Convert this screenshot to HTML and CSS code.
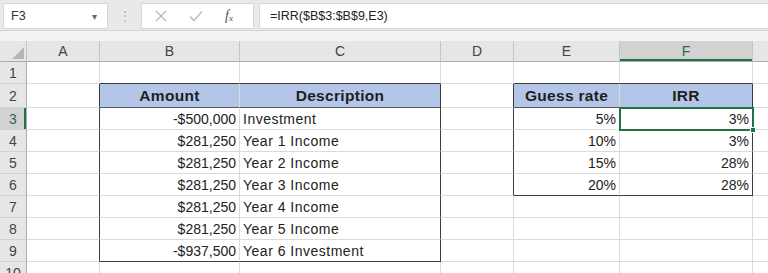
FILE: index.html
```html
<!DOCTYPE html>
<html lang="en">
<head>
  <meta charset="UTF-8"/>
  <title>IRR guess rate</title>
  <link rel="stylesheet" href="styles.css">
</head>
<body>
  <!-- Formula bar -->
  <div class="formula-bar">
    <div class="name-box">
      <span>F3</span>
      <span class="caret">&#9662;</span>
    </div>
    <div class="grip">&#8942;</div>
    <div class="fx-box">
      <svg class="ico" width="12" height="12" viewBox="0 0 12 12"><path d="M1 1 L11 11 M11 1 L1 11" stroke="#b8b8b8" stroke-width="1.3" fill="none"/></svg>
      <svg class="ico" width="14" height="12" viewBox="0 0 14 12"><path d="M1 6.5 L5 10.5 L13 1.5" stroke="#b8b8b8" stroke-width="1.3" fill="none"/></svg>
      <span class="fx">f<sub>x</sub></span>
    </div>
    <div class="formula-input">=IRR($B$3:$B$9,E3)</div>
  </div>

  <!-- Sheet grid -->
  <table class="sheet">
    <colgroup>
      <col style="width:27px"><col style="width:73px"><col style="width:140px"><col style="width:201px">
      <col style="width:73px"><col style="width:106px"><col style="width:133px"><col style="width:60px">
    </colgroup>
    <tr class="col-heads">
      <th class="corner"><svg width="12" height="12" viewBox="0 0 12 12"><polygon points="12,0 12,12 0,12" fill="#b5b5b5"/></svg></th>
      <th>A</th><th>B</th><th>C</th><th>D</th><th>E</th><th class="sel-col">F</th><th></th>
    </tr>
    <tr>
      <th class="rh">1</th>
      <td></td><td class="b-bot"></td><td class="b-bot"></td><td></td><td class="b-bot"></td><td class="b-bot"></td><td></td>
    </tr>
    <tr class="t-head">
      <th class="rh">2</th>
      <td class="b-right"></td><td class="hd b-hd">Amount</td><td class="hd b-hd b-right">Description</td>
      <td class="b-right"></td><td class="hd b-hd">Guess rate</td><td class="hd b-hd b-right">IRR</td><td></td>
    </tr>
    <tr>
      <th class="rh sel-row">3</th>
      <td class="b-right"></td><td class="num">-$500,000</td><td class="txt b-right">Investment</td>
      <td class="b-right"></td><td class="num">5%</td><td class="num b-right active">3%</td><td></td>
    </tr>
    <tr>
      <th class="rh">4</th>
      <td class="b-right"></td><td class="num">$281,250</td><td class="txt b-right">Year 1 Income</td>
      <td class="b-right"></td><td class="num">10%</td><td class="num b-right">3%</td><td></td>
    </tr>
    <tr>
      <th class="rh">5</th>
      <td class="b-right"></td><td class="num">$281,250</td><td class="txt b-right">Year 2 Income</td>
      <td class="b-right"></td><td class="num">15%</td><td class="num b-right">28%</td><td></td>
    </tr>
    <tr>
      <th class="rh">6</th>
      <td class="b-right"></td><td class="num">$281,250</td><td class="txt b-right">Year 3 Income</td>
      <td class="b-right"></td><td class="num b-bot">20%</td><td class="num b-right b-bot">28%</td><td></td>
    </tr>
    <tr>
      <th class="rh">7</th>
      <td class="b-right"></td><td class="num">$281,250</td><td class="txt b-right">Year 4 Income</td>
      <td></td><td></td><td></td><td></td>
    </tr>
    <tr>
      <th class="rh">8</th>
      <td class="b-right"></td><td class="num">$281,250</td><td class="txt b-right">Year 5 Income</td>
      <td></td><td></td><td></td><td></td>
    </tr>
    <tr>
      <th class="rh">9</th>
      <td class="b-right"></td><td class="num b-bot">-$937,500</td><td class="txt b-right b-bot">Year 6 Investment</td>
      <td></td><td></td><td></td><td></td>
    </tr>
    <tr>
      <th class="rh">10</th>
      <td></td><td></td><td></td><td></td><td></td><td></td><td></td>
    </tr>
  </table>
</body>
</html>
```

FILE: styles.css
```css
*, *::before, *::after { box-sizing: border-box; }

body {
  margin: 0;
  background: #f3f3f3;
  font-family: 'Liberation Sans', Arial, sans-serif;
  color: #222;
  overflow: hidden;
}

/* Formula bar */
.formula-bar {
  display: flex;
  align-items: stretch;
  height: 31px;
  padding: 3px 0 1px 3px;
  background: #e9e9e9;
  border-bottom: 1px solid #d4d4d4;
  margin-bottom: 10px;
}
.name-box {
  width: 105px;
  display: flex; align-items: center; justify-content: space-between;
  background: #fff; border: 1px solid #d8d8d8;
  padding: 0 10px 0 7px;
  font-size: 12.5px; color: #333;
}
.name-box .caret { font-size: 10px; color: #666; }
.grip {
  width: 33px;
  display: flex; align-items: center; justify-content: center;
  color: #b5b5b5; font-size: 14px;
}
.fx-box {
  width: 113px;
  display: flex; align-items: center; justify-content: space-between;
  background: #fff; border: 1px solid #d8d8d8;
  padding: 0 20px 0 13px;
}
.fx {
  font-family: 'Liberation Serif', serif;
  font-style: italic; font-size: 14px; color: #555;
  line-height: 1;
}
.fx sub { font-size: 9px; vertical-align: -1px; }
.formula-input {
  flex: 1;
  margin-left: 5px;
  display: flex; align-items: center;
  background: #fff; border: 1px solid #d8d8d8; border-right: none;
  padding-left: 10px;
  font-size: 12.5px; color: #222;
}

/* Sheet */
.sheet {
  table-layout: fixed;
  border-collapse: separate;
  border-spacing: 0;
  width: 813px;
  background: #fff;
  font-size: 14px;
}
.sheet th, .sheet td {
  height: 22px;
  padding: 0 3px;
  border-right: 1px solid #dadada;
  border-bottom: 1px solid #dadada;
  white-space: nowrap;
  overflow: hidden;
  position: relative;
}
.sheet .t-head th, .sheet .t-head td { height: 24px; }
.col-heads th {
  height: 21px;
  background: #e6e6e6;
  border-right-color: #c4c4c4;
  border-bottom-color: #acacac;
  font-weight: normal;
  font-size: 14px;
  color: #444;
}
.col-heads .corner {
  text-align: right; vertical-align: bottom;
  padding: 0 2px 2px 0;
}
.col-heads .corner svg { display: block; margin-left: auto; }
.col-heads .sel-col {
  background: #d2d2d2;
  color: #2d6b47;
  box-shadow: inset 0 -2px 0 #217346;
}
.rh {
  background: #e6e6e6;
  border-right-color: #acacac !important;
  border-bottom-color: #d0d0d0 !important;
  font-weight: normal;
  font-size: 14px;
  color: #444;
  text-align: center;
}
.rh.sel-row {
  background: #d2d2d2;
  color: #2d6b47;
  box-shadow: inset -2px 0 0 #217346;
}

.num { text-align: right; }
.txt { letter-spacing: .5px; }
.hd {
  background: #b4c6e7;
  font-weight: bold;
  text-align: center;
  font-size: 15.5px;
  letter-spacing: .3px;
  color: #1e1e1e;
}

/* Table borders around the data blocks */
.sheet .b-right { border-right-color: #3c3c3c; }
.sheet .b-bot { border-bottom-color: #3c3c3c; }
.sheet .b-hd { border-bottom-color: #5a5a5a; }

/* Active cell */
.sheet .active {
  outline: 2px solid #217346;
  outline-offset: -1px;
  overflow: visible;
  z-index: 2;
}
.sheet .active::after {
  content: "";
  position: absolute;
  right: -4px; bottom: -4px;
  width: 6px; height: 6px;
  background: #217346;
  border: 1px solid #fff;
}
```
